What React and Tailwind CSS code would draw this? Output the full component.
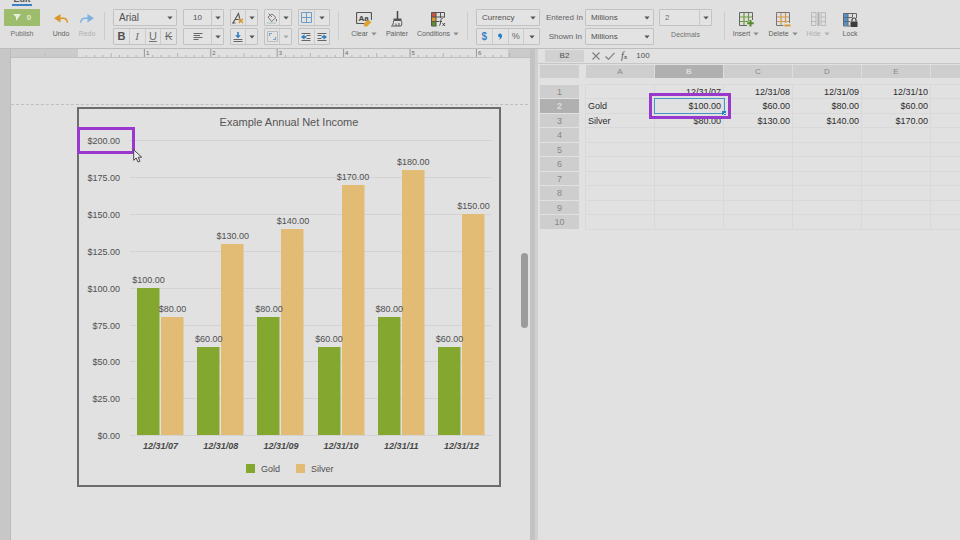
import React from "react";

const SERIES = [
  { date: "12/31/07", gold: 100, silver: 80 },
  { date: "12/31/08", gold: 60, silver: 130 },
  { date: "12/31/09", gold: 80, silver: 140 },
  { date: "12/31/10", gold: 60, silver: 170 },
  { date: "12/31/11", gold: 80, silver: 180 },
  { date: "12/31/12", gold: 60, silver: 150 },
];

const money = (n) => `$${n.toFixed(2)}`;

function Caret({ className = "text-[#555]" }) {
  return (
    <svg aria-hidden="true" viewBox="0 0 6 4" className={`h-1 w-1.5 shrink-0 ${className}`}>
      <path d="M0.4 0.4h5.2L3 3.6z" fill="currentColor" />
    </svg>
  );
}

function Separator() {
  return <div className="mx-2 mt-[3px] h-[28px] w-px shrink-0 bg-[#cccccc]" />;
}

function PickList({ label, value, options = [], split = false, className, inset = "pl-[5px]" }) {
  return (
    <div className={`relative h-[17px] shrink-0 rounded-[1px] border border-[#c2c2c2] bg-[#e3e3e3] ${className}`}>
      <select
        aria-label={label}
        defaultValue={value}
        className={`block h-full w-full appearance-none bg-transparent outline-none ${inset} ${split ? "pr-3" : "pr-2"}`}
      >
        <option>{value}</option>
        {options.map((o) => (
          <option key={o}>{o}</option>
        ))}
      </select>
      <span
        className={`pointer-events-none absolute inset-y-0 right-0 flex w-[12px] items-center justify-center ${split ? "border-l border-[#c8c8c8]" : ""}`}
      >
        <Caret />
      </span>
    </div>
  );
}

function ButtonStrip({ items, className }) {
  return (
    <div className={`flex h-[17px] shrink-0 rounded-[1px] border border-[#c2c2c2] bg-[#e3e3e3] ${className}`}>
      {items.map(({ label, icon, grow }, i) => (
        <button
          key={label}
          type="button"
          aria-label={label}
          className={`flex items-center justify-center ${grow === false ? "w-[12px]" : "flex-1"} ${i ? "border-l border-[#cccccc]" : ""}`}
        >
          {icon}
        </button>
      ))}
    </div>
  );
}

function Tool({ label, icon, menu = false, faded = false, className }) {
  return (
    <button
      type="button"
      className={`flex shrink-0 flex-col items-center gap-[2px] text-[7px] leading-[10px] ${faded ? "text-[#b0b0b0]" : "text-[#606060]"} ${className}`}
    >
      <span className="flex h-[18px] items-end justify-center">{icon}</span>
      <span className="flex items-center gap-[3px] whitespace-nowrap">
        {label}
        {menu && <Caret className={faded ? "text-[#b0b0b0]" : "text-[#8a8a8a]"} />}
      </span>
    </button>
  );
}

function Icon({ children, className = "h-3.5 w-3.5", box = "0 0 14 14" }) {
  return (
    <svg aria-hidden="true" viewBox={box} fill="none" className={className}>
      {children}
    </svg>
  );
}

const UndoIcon = ({ color, flip }) => (
  <Icon className="mb-0.5 h-3 w-3.5" box="0 0 14 12">
    <g transform={flip ? "matrix(-1 0 0 1 14 0)" : undefined}>
      <path d="M0 5.2L6.500 1v8.400z" fill={color} />
      <path d="M5 5.200h4c2.800 0 4.200 1.600 4.400 4.600" stroke={color} strokeWidth="1.400" />
    </g>
  </Icon>
);

const AlignIcon = () => (
  <Icon className="h-2.5 w-2.5" box="0 0 10 10">
    <path d="M0.500 1.500h9M0.500 3.500h6.500M0.500 5.500h9M0.500 7.500h5" stroke="#666" />
  </Icon>
);

const FontColorIcon = () => (
  <Icon className="h-3 w-3" box="0 0 12 12">
    <path d="M1 11L6.500 1.500L8.500 10M3 7.500h4.500" stroke="#555" strokeWidth="1.100" />
    <path d="M0 11h3.500" stroke="#555" />
    <path d="M6.800 6.800l4.200 4.200M11 6.800L6.800 11" stroke="#dc9a2e" strokeWidth="1.500" />
  </Icon>
);

const FillIcon = () => (
  <Icon className="h-3 w-3" box="0 0 12 12">
    <path d="M2 5l4-3 4 3.500-4.500 4zM2.500 1.500l3.500 3.500" stroke="#777" />
    <path d="M10.500 7v2.500" stroke="#777" />
    <path d="M1 11h9" stroke="#b9cdb9" strokeWidth="1.500" />
  </Icon>
);

const BorderIcon = () => (
  <Icon className="h-[11px] w-[11px]" box="0 0 11 11">
    <path d="M0.500 0.500h10v10h-10zM5.500 0.500v10M0.500 5.500h10" stroke="#6a9cc6" />
  </Icon>
);

const BottomIcon = () => (
  <Icon className="h-2.5 w-2.5" box="0 0 10 10">
    <path d="M5 0v4" stroke="#2d7fc4" strokeWidth="1.600" />
    <path d="M2.200 3.300h5.600L5 6.200z" fill="#2d7fc4" />
    <path d="M0.500 7.500h9M0.500 9.500h9" stroke="#666" />
  </Icon>
);

const MergeIcon = () => (
  <Icon className="h-[11px] w-[11px]" box="0 0 11 11">
    <path d="M0.500 0.500h10v10h-10z" stroke="#bcbcbc" />
    <path d="M2.500 5V2.500H5M8.500 6v2.500H6" stroke="#7fa6cc" strokeWidth="1.200" />
  </Icon>
);

const IndentIcon = ({ right }) => (
  <Icon className="h-2.5 w-2.5" box="0 0 10 10">
    <g transform={right ? "matrix(-1 0 0 1 10 0)" : undefined}>
      <path d="M0.500 1.500h9M5.500 3.500h4M5.500 6.500h4M0.500 8.500h9" stroke="#666" />
      <path d="M0 5l3.500-2.800v5.600z" fill="#2d7fc4" />
      <path d="M2.500 5h2.800" stroke="#2d7fc4" strokeWidth="1.800" />
    </g>
  </Icon>
);

const ClearIcon = () => (
  <Icon className="h-[15px] w-4" box="0 0 16 15">
    <path d="M9 11.500H1.500a1 1 0 0 1-1-1v-9a1 1 0 0 1 1-1h13a1 1 0 0 1 1 1V8" stroke="#555" strokeWidth="1.200" />
    <text x="2.500" y="8.800" fontSize="8" fontWeight="700" fill="#444">Aa</text>
    <path d="M7.500 12l4.500-4 3.500 2-4.500 4.500H8.500z" fill="#e0a02c" />
  </Icon>
);

const PainterIcon = () => (
  <Icon className="h-4 w-3" box="0 0 12 16">
    <path d="M6.500 0v8" stroke="#444" strokeWidth="1.500" />
    <path d="M2.500 7.500h8v2.500h-8z" fill="#555" />
    <path d="M2.500 10C2.500 12.500 2 14 0.500 15h9.500c1-1 1-3 0.500-5M5 12.500V15M8 12V15" stroke="#555" />
  </Icon>
);

const ConditionsIcon = () => (
  <Icon className="h-[15px] w-[15px]" box="0 0 15 15">
    <path d="M0.500 0.500h4.500v4.500h-4.500z" fill="#c8553d" />
    <path d="M0.500 5h4.500v4.500h-4.500z" fill="#d99a2e" />
    <path d="M0.500 9.500h4.500v4.500h-4.500z" fill="#5f8f24" />
    <path d="M0.500 0.500h13v5M0.500 0.500v13.500h5M5 0.500V14M9.500 0.500V6M0.500 5h13M0.500 9.500H8" stroke="#555" />
    <path d="M11.500 6.500c-1.500-.3-1.500 1-1.800 3s-.3 4-1.700 4M8.500 9.500h2.500M11.500 11l2.500 3M14 11l-2.500 3" stroke="#444" strokeWidth="0.900" />
  </Icon>
);

const InsertIcon = () => (
  <Icon className="h-[15px] w-[15px]" box="0 0 15 15">
    <path d="M5 0.500V13.500M9.500 0.500V9M0.500 5h13M0.500 9.500h9" stroke="#6e9b3c" strokeWidth="1.200" />
    <path d="M8 13.500H0.500V0.500h13V8" stroke="#666" />
    <path d="M11.500 8v6.500M8.200 11.300h6.500" stroke="#56892a" strokeWidth="2" />
  </Icon>
);

const DeleteIcon = () => (
  <Icon className="h-[15px] w-[15px]" box="0 0 15 15">
    <path d="M5 0.500V13.500M9.500 0.500V11M0.500 5h13M0.500 9.500h13" stroke="#d39a4c" strokeWidth="1.200" />
    <path d="M7.500 13.500H0.500V0.500h13V11" stroke="#777" />
    <path d="M8.500 13.500h6" stroke="#dc9838" strokeWidth="2" />
  </Icon>
);

const HideIcon = () => (
  <Icon className="h-[15px] w-[15px]" box="0 0 15 15">
    <path d="M5 0.500H0.500v13H5M10 0.500h4.500v13H10M0.500 5H5M0.500 9.500H5M10 5h4.500M10 9.500h4.500M5 0.500v13M10 0.500v13" stroke="#b9b9b9" />
    <path d="M7.500 0v14" stroke="#b0b0b0" strokeWidth="2" />
  </Icon>
);

const LockIcon = () => (
  <Icon className="h-[15px] w-[15px]" box="0 0 15 15">
    <path d="M0.500 1.500h4.500v12h-4.500z" fill="#4f94d0" />
    <path d="M7 14H0.500V1.500h13V6M5 1.500V14M9.500 1.500V5M0.500 5.500h9M0.500 9.500H7" stroke="#666" />
    <path d="M7.500 9.500h7V15h-7z" fill="#3c3c3c" />
    <path d="M9 9.500V8a2 2 0 0 1 4 0v1.500" stroke="#3c3c3c" strokeWidth="1.200" />
  </Icon>
);

function Toolbar() {
  return (
    <header className="shrink-0 overflow-hidden border-b border-[#bdbdbd] bg-[#e0e0e0]">
      <nav className="flex h-[6px] items-end overflow-hidden pl-3">
        <button type="button" className="w-5 border-b-2 border-[#3d82c4] text-center text-[9px] leading-[9px] font-bold text-[#555]">
          Edit
        </button>
      </nav>
      <div className="flex pt-[3px] pb-[3px] pl-1">
        <div className="flex w-9 shrink-0 flex-col items-center gap-[3px] text-[7px] leading-[10px] text-[#707070]">
          <button
            type="button"
            aria-labelledby="publish-label"
            className="flex h-[17px] w-full items-center justify-center gap-1.5 rounded-[1px] bg-[#9dbd6c] text-[8px] font-bold text-[#e4ecd8]"
          >
            <Icon className="h-[7px] w-2" box="0 0 8 7">
              <path d="M0 0h8L3 7V3z" fill="#e8eee0" />
            </Icon>
            0
          </button>
          <span id="publish-label">Publish</span>
        </div>
        <Tool label="Undo" icon={<UndoIcon color="#dc9527" />} className="ml-2.5 w-[22px]" />
        <Tool label="Redo" faded icon={<UndoIcon color="#7fb2e0" flip />} className="ml-1 w-[22px]" />
        <div className="ml-[-2px] shrink-0"><Separator /></div>

        <div className="flex shrink-0 flex-col gap-[2px] text-[8px] text-[#505050]">
          <div className="flex gap-1.5">
            <PickList label="Font family" value="Arial" className="w-16 text-[10px]" />
            <PickList label="Font size" value="10" split className="w-[41px]" inset="pl-[9px]" />
            <ButtonStrip className="w-7" items={[{ label: "Font color", icon: <FontColorIcon /> }, { label: "Font color menu", icon: <Caret />, grow: false }]} />
            <ButtonStrip className="w-7" items={[{ label: "Fill color", icon: <FillIcon /> }, { label: "Fill color menu", icon: <Caret />, grow: false }]} />
            <ButtonStrip className="w-8" items={[{ label: "Borders", icon: <BorderIcon /> }, { label: "Borders menu", icon: <Caret /> }]} />
          </div>
          <div className="flex gap-1.5">
            <ButtonStrip
              className="w-16 text-[11px] leading-none text-[#707070]"
              items={[
                { label: "Bold", icon: <b className="text-[#505050]">B</b> },
                { label: "Italic", icon: <i className="font-['Liberation_Serif',serif]">I</i> },
                { label: "Underline", icon: <u>U</u> },
                { label: "Strikethrough", icon: <s>K</s> },
              ]}
            />
            <ButtonStrip className="w-[41px]" items={[{ label: "Align text", icon: <AlignIcon /> }, { label: "Alignment menu", icon: <Caret />, grow: false }]} />
            <ButtonStrip className="w-7" items={[{ label: "Vertical alignment", icon: <BottomIcon /> }, { label: "Vertical alignment menu", icon: <Caret />, grow: false }]} />
            <ButtonStrip className="w-7" items={[{ label: "Merge cells", icon: <MergeIcon /> }, { label: "Merge menu", icon: <Caret className="text-[#aaa]" />, grow: false }]} />
            <ButtonStrip className="w-8" items={[{ label: "Decrease indent", icon: <IndentIcon /> }, { label: "Increase indent", icon: <IndentIcon right /> }]} />
          </div>
        </div>
        <Separator />

        <Tool label="Clear" menu icon={<ClearIcon />} className="ml-1 w-[26px]" />
        <Tool label="Painter" icon={<PainterIcon />} className="ml-[9px] w-[22px]" />
        <Tool label="Conditions" menu icon={<ConditionsIcon />} className="ml-[9px] w-[42px]" />
        <Separator />

        <div className="flex shrink-0 flex-col gap-[2px] text-[8px] text-[#505050]">
          <PickList label="Number format" value="Currency" className="w-16" />
          <ButtonStrip
            className="w-16 text-[10px] leading-none"
            items={[
              { label: "Currency", icon: <span className="font-bold text-[#3d82c4]">$</span> },
              { label: "Thousands separator", icon: <Icon className="h-2 w-1.5" box="0 0 6 8"><path d="M3 0.500a2 2 0 1 0 0 4c0 1-.5 1.800-1.500 2.500C4 6.500 5.200 4.500 5 2.500A2 2 0 0 0 3 .5z" fill="#2d7fc4" /></Icon> },
              { label: "Percent", icon: <span className="text-[9px] text-[#666]">%</span> },
              { label: "More formats", icon: <Caret /> },
            ]}
          />
        </div>
        <div className="ml-1.5 flex shrink-0 flex-col gap-[2px] text-[8px] text-[#606060]">
          <div className="flex items-center justify-end gap-[3px]">
            <span className="w-9 text-right whitespace-nowrap">Entered In</span>
            <PickList label="Entered In" value="Millions" options={["Thousands"]} className="w-[69px] text-[#505050]" />
          </div>
          <div className="flex items-center justify-end gap-[3px]">
            <span className="w-9 text-right whitespace-nowrap">Shown In</span>
            <PickList label="Shown In" value="Millions" options={["Thousands"]} className="w-[69px] text-[#505050]" />
          </div>
        </div>
        <div className="ml-[5px] flex shrink-0 flex-col items-center gap-1 text-[7px] leading-[10px] text-[#707070]">
          <PickList label="Decimals" value="2" split className="w-[53px] text-[8px]" />
          <span>Decimals</span>
        </div>
        <div className="ml-1 shrink-0"><Separator /></div>

        <Tool label="Insert" menu icon={<InsertIcon />} className="w-[26px]" />
        <Tool label="Delete" menu icon={<DeleteIcon />} className="ml-[9px] w-[30px]" />
        <Tool label="Hide" menu faded icon={<HideIcon />} className="ml-2 w-6" />
        <Tool label="Lock" icon={<LockIcon />} className="ml-3 w-4" />
      </div>
    </header>
  );
}

function Ruler() {
  const ticks = Array.from({ length: 62 }, (_, i) => i - 8);
  return (
    <div className="flex h-[9px] shrink-0 overflow-hidden border-b border-[#c0c0c0] bg-[#cbcbcb]">
      <svg aria-hidden="true" width="519" height="9" className="shrink-0">
        <rect x="67" width="430" height="9" fill="#e0e0e0" />
        {ticks.map((t) => {
          const x = 67 + t * 8.3;
          const inch = t % 8 === 0;
          if (x < 5 || x > 500 || t === 0) return null;
          return (
            <g key={t}>
              <path d={`M${x} ${inch ? 0 : t % 4 === 0 ? 4 : 6}V9`} stroke={t < 0 ? "#bdbdbd" : inch ? "#999" : "#b4b4b4"} />
              {inch && t > 0 && (
                <text x={x + 1.5} y="6" fontSize="6" fill="#666">{t / 8}</text>
              )}
            </g>
          );
        })}
      </svg>
    </div>
  );
}

const BASE = 326;
const UNIT = 1.473;

function NetIncomeChart() {
  const steps = [0, 25, 50, 75, 100, 125, 150, 175, 200];
  const top = (v) => Math.round(BASE - v * UNIT);
  return (
    <figure className="relative ml-[66px] w-[424px] border-2 border-[#6c6c6c]">
      <svg viewBox="1 0 420 376" className="block w-full" role="img" aria-label="Example Annual Net Income">
        <text x="211" y="17" textAnchor="middle" fontSize="11" fill="#555">Example Annual Net Income</text>
        {steps.map((v) => (
          <g key={v}>
            <path d={`M52 ${top(v) + 0.5}H413`} stroke="#d3d3d3" />
            <text x="42" y={top(v) + 4} textAnchor="end" fontSize="9" fill="#505050">{money(v)}</text>
          </g>
        ))}
        {SERIES.map(({ date, gold, silver }, i) => {
          const x = 59 + i * 60.2;
          const bx = Math.round(x);
          return (
            <g key={date}>
              <rect x={bx} y={top(gold)} width="22.500" height={BASE - top(gold)} fill="#84a72f" />
              <rect x={bx + 24} y={top(silver)} width="22.500" height={BASE - top(silver)} fill="#e2bb74" />
              <text x={x + 11.5} y={top(gold) - 5} textAnchor="middle" fontSize="9" fill="#505050">{money(gold)}</text>
              <text x={x + 35.5} y={top(silver) - 5} textAnchor="middle" fontSize="9" fill="#505050">{money(silver)}</text>
              <text x={x + 23.5} y="340" textAnchor="middle" fontSize="9" fontWeight="700" fontStyle="italic" fill="#484848">{date}</text>
            </g>
          );
        })}
        <rect x="168" y="355" width="9" height="9" fill="#84a72f" />
        <text x="183" y="363" fontSize="9" fill="#505050">Gold</text>
        <rect x="218" y="355" width="9" height="9" fill="#e2bb74" />
        <text x="233" y="363" fontSize="9" fill="#505050">Silver</text>
      </svg>
      <div className="absolute top-[18px] left-[-2px] h-[27px] w-[58px] border-3 border-[#9a37cc]" />
      <svg aria-hidden="true" viewBox="0 0 10 14" className="absolute top-[40px] left-[54px] h-3.5 w-2.5">
        <path d="M0.700 0.800v10.500l2.500-2.300 1.800 4 2-.9-1.800-3.900h3.500z" fill="#ececec" stroke="#4a4a4a" />
      </svg>
    </figure>
  );
}

function DocumentPane() {
  return (
    <section className="relative flex min-w-0 flex-[530] overflow-hidden bg-[#e1e1e1]">
      <div className="w-[11px] shrink-0 border-r border-[#bababa] bg-[#c7c7c7]" />
      <div className="min-w-0 flex-1">
        <Ruler />
        <div className="mr-0.5 mb-[2px] h-[47px] border-b border-dashed border-[#bfbfbf]" />
        <NetIncomeChart />
      </div>
      <div className="absolute top-[204px] right-[2px] h-[75px] w-[7px] rounded-full bg-[#9b9b9b]" />
    </section>
  );
}

const COLUMNS = ["A", "B", "C", "D", "E"];
const ROWS = Array.from({ length: 10 }, (_, r) => {
  if (r === 0) return ["", ...SERIES.slice(0, 4).map((s) => s.date)];
  if (r === 1) return ["Gold", ...SERIES.slice(0, 4).map((s) => money(s.gold))];
  if (r === 2) return ["Silver", ...SERIES.slice(0, 4).map((s) => money(s.silver))];
  return ["", "", "", "", ""];
});

function Sheet() {
  return (
    <section className="min-w-0 flex-[422] overflow-hidden bg-[#e1e1e1]">
      <div className="flex h-[15px] items-center border-b border-[#c6c6c6] pb-px pl-[7px] text-[8px] text-[#505050]">
        <input aria-label="Cell name" defaultValue="B2" className="h-3 w-[39px] bg-[#d1d1d1] text-center outline-none" />
        <button type="button" aria-label="Cancel" className="ml-2">
          <Icon className="h-2 w-2" box="0 0 8 8"><path d="M0.500 0.500l7 7M7.500 0.500l-7 7" stroke="#808080" strokeWidth="1.200" /></Icon>
        </button>
        <button type="button" aria-label="Accept" className="ml-[5px]">
          <Icon className="h-2 w-2.5" box="0 0 10 8"><path d="M0.500 4.500L3.500 7.300 9.500 0.800" stroke="#808080" strokeWidth="1.200" /></Icon>
        </button>
        <label htmlFor="formula" className="ml-[6px] font-['Liberation_Serif',serif] text-[10px] leading-none italic">
          f<span className="text-[7px] font-bold">x</span>
        </label>
        <input id="formula" defaultValue="100" className="ml-[9px] min-w-0 flex-1 bg-transparent outline-none" />
      </div>
      <div className="pt-px pl-[2px]">
        <table className="w-full table-fixed border-separate border-spacing-0 text-[9px] leading-[10px] text-[#2c2c2c]">
          <colgroup>
            <col className="w-[39px]" />
            <col className="w-[7px]" />
            {COLUMNS.map((c) => (
              <col key={c} className="w-[69px]" />
            ))}
            <col />
          </colgroup>
          <thead className="text-[8px] text-[#888]">
            <tr className="h-[13px]">
              <td className="bg-[#cecece] p-0" />
              <td className="p-0" />
              {COLUMNS.map((c) => (
                <th
                  key={c}
                  scope="col"
                  className={`border-r border-[#dddddd] p-0 ${c === "B" ? "bg-[#b0b0b0] font-bold text-[#dcdcdc]" : "bg-[#cecece] font-normal"}`}
                >
                  {c}
                </th>
              ))}
              <td className="bg-[#cecece] p-0" />
            </tr>
            <tr className="h-[7px]">
              <td colSpan={2} className="p-0" />
              <td colSpan={6} className="border-b border-[#d9d9d9] p-0" />
            </tr>
          </thead>
          <tbody>
            {ROWS.map((cells, r) => (
              <tr key={r} className="odd:h-[14px] even:h-[15px]">
                <th
                  scope="row"
                  className={`border-b border-[#e1e1e1] p-0 text-[9px] ${r === 1 ? "bg-[#b0b0b0] font-bold text-[#dcdcdc]" : "bg-[#cecece] font-normal text-[#888]"}`}
                >
                  {r + 1}
                </th>
                <td className="border-r border-[#d9d9d9] p-0" />
                {cells.map((text, c) => (
                  <td
                    key={c}
                    className={`relative border-r border-b border-[#d9d9d9] py-0 ${c ? "pr-0.5 text-right" : "pl-[2px] text-left"}`}
                  >
                    {text}
                    {r === 1 && c === 1 && (
                      <>
                        <span className="absolute -top-px -right-[2px] -bottom-px -left-px border border-[#4595c8]">
                          <span className="absolute -right-[2px] -bottom-[2px] h-1 w-1 bg-[#2683c6]" />
                        </span>
                        <span className="absolute -top-[6px] -right-[8px] -bottom-[6px] -left-[6px] z-10 border-3 border-[#9a37cc]" />
                      </>
                    )}
                  </td>
                ))}
                <td className="border-b border-[#d9d9d9] p-0" />
              </tr>
            ))}
          </tbody>
        </table>
      </div>
    </section>
  );
}

export default function App() {
  return (
    <div className="flex h-screen flex-col overflow-hidden bg-[#e1e1e1] font-['Liberation_Sans',Arial,sans-serif]">
      <Toolbar />
      <main className="flex min-h-0 flex-1">
        <DocumentPane />
        <div className="w-2 shrink-0 border-r-3 border-[#d0d0d0] bg-[#c3c3c3]" />
        <Sheet />
      </main>
    </div>
  );
}
